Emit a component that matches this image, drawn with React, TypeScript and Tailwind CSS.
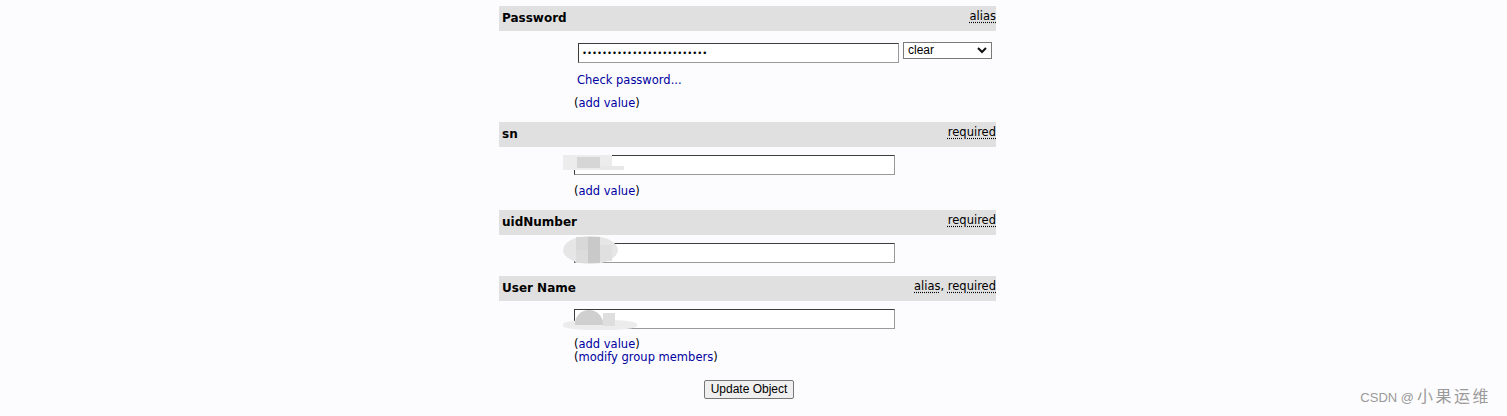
import type { ReactNode } from "react";

const linkCls = "text-[#0000a0]";

function AttrHeader({ name, tags }: { name: string; tags: string[] }) {
  return (
    <div className="flex h-[25px] items-start justify-between bg-[#e0e0e0] pl-[3px]">
      <span className="pt-[6px] text-[12px] font-bold leading-[13px] text-black">{name}</span>
      <span className="pt-[4px] text-[11.5px] leading-[13px] text-black">
        {tags.map((t, i) => (
          <span key={t}>
            {i > 0 && ", "}
            <abbr className="underline decoration-dotted underline-offset-[2px]">{t}</abbr>
          </span>
        ))}
      </span>
    </div>
  );
}

function TextBox({ blob, type = "text", value = "" }: { blob?: ReactNode; type?: string; value?: string }) {
  return (
    <div className="relative h-[20px] w-[321px]">
      <input
        type={type}
        value={value}
        readOnly
        className="block h-full w-full border border-t-[#3c3c3c] border-l-[#3c3c3c] border-r-[#9a9a9a] border-b-[#9a9a9a] bg-white px-[3px] text-[8.5px] outline-none"
      />
      {blob}
    </div>
  );
}

function AddValue({ className = "" }: { className?: string }) {
  return (
    <div className={"text-[11.5px] leading-[13px] text-black " + className}>
      (<span className={linkCls}>add value</span>)
    </div>
  );
}

export default function App() {
  return (
    <div className="relative min-h-screen bg-[#fcfcfe] pt-[6px] font-['DejaVu_Sans',sans-serif]">
      <div className="ml-[499px] w-[497px]">
        {/* Password */}
        <AttrHeader name="Password" tags={["alias"]} />
        <div className="pl-[75px]">
          <div className="mt-[11px] flex items-start gap-[4px] pl-[4px]">
            <div className="mt-[1px]">
              <TextBox type="password" value="passwordpasswordpassword1" />
            </div>
            <div className="relative h-[17px] w-[89px] border border-[#7a7a7a] bg-white">
              <span className="block pl-[4px] font-['Liberation_Sans',Arial,sans-serif] text-[12px] leading-[15px] text-black">
                clear
              </span>
              <svg className="absolute right-[4px] top-[4px]" width="10" height="7" viewBox="0 0 10 7">
                <polyline points="1,1 5,5 9,1" fill="none" stroke="#111" strokeWidth="2" />
              </svg>
            </div>
          </div>
          <div className={"mt-[11px] pl-[3px] text-[11.5px] leading-[13px] " + linkCls}>Check password...</div>
          <AddValue className="mt-[10px]" />
        </div>

        {/* sn */}
        <div className="mt-[12px]">
          <AttrHeader name="sn" tags={["required"]} />
        </div>
        <div className="pl-[75px]">
          <div className="mt-[8px]">
            <TextBox
              blob={
                <>
                  <div className="absolute left-[-11px] top-0 h-[15px] w-[49px] bg-[#ececec] blur-[0.5px]" />
                  <div className="absolute left-[3px] top-[2px] h-[11px] w-[23px] bg-[#d6d6d6]" />
                  <div className="absolute left-[26px] top-[11px] h-[4px] w-[24px] bg-[#e8e8e8]" />
                </>
              }
            />
          </div>
          <AddValue className="mt-[10px]" />
        </div>

        {/* uidNumber */}
        <div className="mt-[12px]">
          <AttrHeader name="uidNumber" tags={["required"]} />
        </div>
        <div className="pl-[75px]">
          <div className="mt-[8px]">
            <TextBox
              blob={
                <>
                  <div className="absolute left-[-11px] top-[-7px] h-[28px] w-[55px] rounded-[50%] bg-[#e6e6e6] blur-[0.5px]" />
                  <div className="absolute left-[2px] top-[-6px] h-[13px] w-[12px] bg-[#d8d8d8]" />
                  <div className="absolute left-[14px] top-[-6px] h-[26px] w-[12px] bg-[#c9c9c9]" />
                  <div className="absolute left-[2px] top-[7px] h-[13px] w-[12px] bg-[#dcdcdc]" />
                  <div className="absolute left-[26px] top-[2px] h-[16px] w-[12px] bg-[#e0e0e0]" />
                </>
              }
            />
          </div>
        </div>

        {/* User Name */}
        <div className="mt-[13px]">
          <AttrHeader name="User Name" tags={["alias", "required"]} />
        </div>
        <div className="pl-[75px]">
          <div className="mt-[8px]">
            <TextBox
              blob={
                <>
                  <div className="absolute left-[-11px] top-[11px] h-[10px] w-[74px] rounded-[40%] bg-[#ececec] blur-[0.5px]" />
                  <div className="absolute left-[1px] top-[1px] h-[15px] w-[28px] rounded-t-full bg-[#cfcfcf]" />
                  <div className="absolute left-[29px] top-[4px] h-[13px] w-[12px] bg-[#dedede]" />
                </>
              }
            />
          </div>
          <AddValue className="mt-[9px]" />
          <div className="text-[11.5px] leading-[13px] text-black">
            (<span className={linkCls}>modify group members</span>)
          </div>
        </div>

        <div className="mt-[16px] flex justify-center pl-[3px]">
          <button className="h-[19px] w-[90px] rounded-[2px] border border-[#767676] bg-[#efefef] font-['Liberation_Sans',Arial,sans-serif] text-[12px] leading-[17px] text-black">
            Update Object
          </button>
        </div>
      </div>

      <div className="absolute bottom-[9px] right-[16px] flex items-baseline text-[#9a9a9a]">
        <span className="font-['Liberation_Sans',Arial,sans-serif] text-[13px]">CSDN @</span>
        <span className="ml-[3px] font-['Noto_Sans_CJK_SC',sans-serif] text-[16px] tracking-[2.5px]">小果运维</span>
      </div>
    </div>
  );
}
